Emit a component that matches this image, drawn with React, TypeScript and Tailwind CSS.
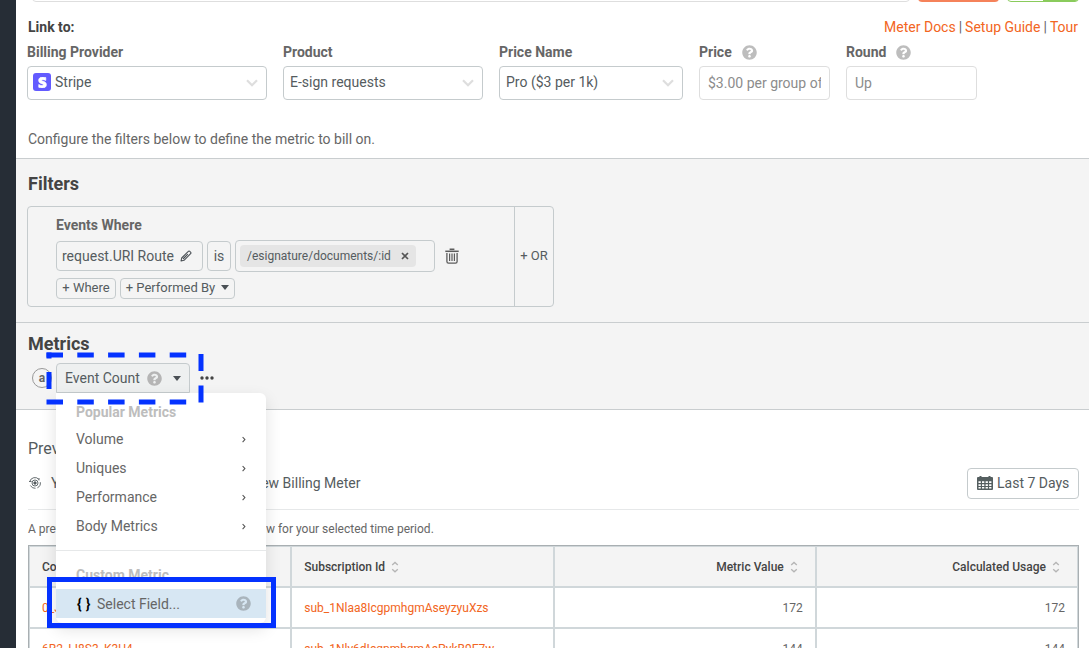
import { useState } from "react";
import type { ReactNode } from "react";
import { FaQuestionCircle, FaStripeS } from "react-icons/fa";

function Help({ className = "text-[#bdbdbd]" }: { className?: string }) {
  return <FaQuestionCircle className={`size-[15px] shrink-0 ${className}`} aria-hidden />;
}

function Chevron() {
  return (
    <svg viewBox="0 0 12 8" className="pointer-events-none absolute top-[13px] right-[9px] h-2 w-3" aria-hidden>
      <path d="M1 1.2 6 6.2 11 1.2" fill="none" stroke="#dedede" strokeWidth="2.2" />
    </svg>
  );
}

function SelectField({ id, label, value, width, icon }: { id: string; label: string; value: string; width: string; icon?: ReactNode }) {
  return (
    <div className={width}>
      <label htmlFor={id} className="block leading-5 font-bold text-[#666]">{label}</label>
      <div className="relative mt-1">
        {icon}
        <select
          id={id}
          className={`block h-[34px] w-full appearance-none rounded border border-[#c5cbcd] bg-white pr-6 pb-0.5 text-[#555c60] ${icon ? "pl-[27px]" : "pl-1.5"}`}
        >
          <option>{value}</option>
        </select>
        <Chevron />
      </div>
    </div>
  );
}

function TextField({ id, label, placeholder }: { id: string; label: string; placeholder: string }) {
  return (
    <div className="w-[131px]">
      <label htmlFor={id} className="flex h-5 items-center gap-2.5 font-bold text-[#666]">
        {label}
        <Help />
      </label>
      <input
        id={id}
        placeholder={placeholder}
        className="mt-1 block h-[34px] w-full rounded-sm border border-[#dedede] bg-white px-2 text-[#808080] placeholder:text-[#8c8c8c]"
      />
    </div>
  );
}

function Sorter() {
  return (
    <svg viewBox="0 0 8 12" className="h-3 w-2" aria-hidden>
      <path d="M1.2 4 4 1.4 6.800 4M1.2 8.200 4 10.800 6.800 8.200" fill="none" stroke="#b5b5b5" strokeWidth="1.300" />
    </svg>
  );
}

function Caret() {
  return (
    <svg viewBox="0 0 8 5" className="h-[5px] w-2" aria-hidden>
      <path d="M0 0h8L4 5z" fill="#4a5055" />
    </svg>
  );
}

function Pencil() {
  return (
    <svg viewBox="0 0 12 12" className="size-3" aria-hidden>
      <path d="M1 11l.7-3L8.300 1.400a1 1 0 0 1 1.500 0l.800.800a1 1 0 0 1 0 1.500L4 10.300zM3 9l4.800-4.800" fill="none" stroke="#4a5055" strokeWidth="1.100" strokeLinejoin="round" />
    </svg>
  );
}

function Trash() {
  return (
    <svg viewBox="0 0 14 16" className="h-4 w-3.5" fill="none" stroke="#5c5c5c" aria-hidden>
      <path d="M4.6 1.300h4.800" strokeWidth="1.600" />
      <path d="M0.300 3.300h13.400" strokeWidth="1.500" />
      <path d="M1.900 5v8.500q0 1.700 1.600 1.700h7q1.600 0 1.600-1.700V5" strokeWidth="1.300" />
      <path d="M4.600 5.500v7.500M7 5.500v7.500M9.400 5.500v7.500" strokeWidth="1.200" />
    </svg>
  );
}

function Calendar() {
  return (
    <svg viewBox="0 0 16 14" className="h-3.5 w-4 shrink-0" aria-hidden>
      <path d="M2.500 0h2v1h7V0h2v1H15q1 0 1 1v11q0 1-1 1H1q-1 0-1-1V2q0-1 1-1h1.500z" fill="#555f60" />
      <path
        d="M1.500 5.200h2.300v1.900H1.500zM5 5.200h2.300v1.900H5zM8.600 5.200h2.300v1.900H8.600zM12.100 5.200h2.300v1.900h-2.300zM1.500 8.200h2.300v1.700H1.500zM5 8.200h2.300v1.700H5zM8.600 8.200h2.300v1.700H8.600zM12.100 8.200h2.300v1.700h-2.300zM1.500 11h2.300v1.600H1.500zM5 11h2.300v1.600H5zM8.600 11h2.300v1.600H8.600zM12.100 11h2.300v1.600h-2.300z"
        fill="#fff"
      />
    </svg>
  );
}

function Target() {
  return (
    <svg viewBox="0 0 12 12" className="size-3" fill="none" stroke="#555c60" aria-hidden>
      <circle cx="6" cy="6" r="1.2" fill="#555c60" />
      <circle cx="6" cy="6" r="3" strokeWidth="0.9" />
      <path d="M0.8 4.4A5.3 5.3 0 0 1 10 2.5M11.3 5.2A5.3 5.3 0 0 1 8.4 10.8M6.5 11.3A5.3 5.3 0 0 1 1.4 8.5M0 4.5h2.6M10 1v2.4" strokeWidth="0.9" />
    </svg>
  );
}

const METRICS = ["Volume", "Uniques", "Performance", "Body Metrics"];

function MetricMenu() {
  return (
    <div role="menu" className="absolute top-full left-0 z-10 w-[210px] rounded-b-md rounded-tr-md bg-white pt-2 pb-[5px] text-[#666] shadow-[0_6px_16px_rgba(0,0,0,0.12)]">
      <h3 className="px-5 pb-px leading-[22px] font-bold text-[#bdbdbd]">Popular Metrics</h3>
      {METRICS.map((name) => (
        <button key={name} role="menuitem" className="flex h-[29px] w-full items-center justify-between px-5 text-left">
          {name}
          <svg viewBox="0 0 4 7" className="mt-px h-[7px] w-1" aria-hidden>
            <path d="M.6 1 2.900 3.600.6 6.200" fill="none" stroke="#555" strokeWidth="1.100" />
          </svg>
        </button>
      ))}
      <hr className="mt-2.5 border-[#e6e8e9]" />
      <h3 className="px-5 pt-3 pb-0.5 leading-6 font-bold text-[#bdbdbd]">Custom Metric</h3>
      <button role="menuitem" className="flex h-[29px] w-full items-center bg-[#d7e7f3] pr-[15px] pl-[21px]">
        <span className="flex w-5 gap-1 font-bold text-black">
          <span>{"{"}</span>
          <span>{"}"}</span>
        </span>
        <span className="flex-1 text-left">Select Field...</span>
        <Help className="text-[#a9b4bc]" />
      </button>
      <div className="pointer-events-none absolute -right-2.5 -bottom-[5px] -left-[9px] h-[51px] border-[5px] border-[#0432ff]" />
    </div>
  );
}

function DashedFrame() {
  return (
    <svg viewBox="0 0 158 54" className="pointer-events-none absolute -top-[11px] -left-[10px] z-20 h-[54px] w-[158px]" stroke="#0432ff" strokeWidth="5" fill="none" aria-hidden>
      <path d="M0.500 3H141" strokeDasharray="16.500 14.300" />
      <path d="M0.500 50H141" strokeDasharray="16.500 14.300" />
      <path d="M3 0.500V6.500M3 20v17" />
      <path d="M155 2v17M155 33.500v17" />
    </svg>
  );
}

const ROWS = [
  { company: "0_J2K8_4LM9", sub: "sub_1Nlaa8IcgpmhgmAseyzyuXzs", value: 172 },
  { company: "6R2_LI8S3_K3U4", sub: "sub_1Nly6dIcgpmhgmAsPykB9E7w", value: 144 },
];

const HEADERS = ["Company Id", "Subscription Id", "Metric Value", "Calculated Usage"];

export default function App() {
  const [open, setOpen] = useState(true);
  return (
    <div className="flex h-screen overflow-hidden bg-white font-[Roboto,sans-serif] text-sm text-[#666]">
      <aside className="w-4 shrink-0 bg-[#262d36]" />
      <main className="min-w-0 flex-1">
        <div className="flex h-0.5 items-end overflow-hidden pr-2.5 pl-4">
          <input aria-label="Meter name" className="h-8 min-w-0 flex-1 rounded border border-[#dedede]" />
          <button aria-label="Save" className="ml-2 h-8 w-[81px] rounded bg-[#f5825a]" />
          <div className="ml-2 flex h-8 w-[72px] overflow-hidden rounded border border-[#8acb5c]">
            <button aria-label="Off" className="flex-1" />
            <button aria-label="On" className="flex-1 bg-[#8acb5c]" />
          </div>
        </div>

        <section className="h-[156px] pl-[11px]">
          <div className="flex items-center justify-between pt-[15px] pr-[11px] pl-px">
            <h2 className="leading-5 font-bold text-[#444]">Link to:</h2>
            <nav className="flex items-center gap-[3px] leading-5">
              <a href="#docs" className="text-[#f26522]">Meter Docs</a>|
              <a href="#setup" className="text-[#f26522]">Setup Guide</a>|
              <a href="#tour" className="text-[#f26522]">Tour</a>
            </nav>
          </div>
          <div className="mt-[5px] flex gap-4">
            <SelectField
              id="provider"
              label="Billing Provider"
              value="Stripe"
              width="w-60"
              icon={
                <span className="pointer-events-none absolute top-[7px] left-1.5 flex size-[18px] items-center justify-center rounded-[3px] bg-[#635bff]">
                  <FaStripeS className="size-[11px] text-white" stroke="white" strokeWidth="30" />
                </span>
              }
            />
            <SelectField id="product" label="Product" value="E-sign requests" width="w-[200px]" />
            <SelectField id="price-name" label="Price Name" value="Pro ($3 per 1k)" width="w-46" />
            <TextField id="price" label="Price" placeholder="$3.00 per group of 1000" />
            <TextField id="round" label="Round" placeholder="Up" />
          </div>
          <p className="mt-[29px] pl-px leading-5">Configure the filters below to define the metric to bill on.</p>
        </section>

        <section className="h-[164px] border-t border-[#c9cdcf] bg-[#f4f4f4] pl-[11px]">
          <h2 className="pt-[13px] pl-px text-lg leading-6 font-bold text-[#444]">Filters</h2>
          <div className="mt-2.5 flex h-[101px] w-[527px] rounded-sm border border-[#c5cbcd]">
            <div className="flex-1 pt-2 pl-7">
              <h3 className="leading-5 font-bold text-[#666]">Events Where</h3>
              <div className="mt-[5px] flex items-center gap-1 text-[#555c60]">
                <button className="flex h-[30px] w-[147px] items-center gap-1.5 rounded border border-[#c5cbcd] px-[5px]">
                  request.URI Route <Pencil />
                </button>
                <button className="h-[30px] w-6 rounded border border-[#c5cbcd]">is</button>
                <div className="flex h-8 w-[200px] items-center rounded border border-[#c5cbcd] px-1">
                  <span className="flex h-[22px] w-[176px] items-center justify-between rounded-sm bg-[#e5e5e5] px-[7px] text-xs">
                    /esignature/documents/:id
                    <button aria-label="Remove value">
                      <svg viewBox="0 0 8 8" className="size-2" aria-hidden>
                        <path d="M1 1l6 6M7 1L1 7" stroke="#555" strokeWidth="1.700" />
                      </svg>
                    </button>
                  </span>
                </div>
                <button aria-label="Delete filter" className="ml-1.5"><Trash /></button>
              </div>
              <div className="mt-1.5 flex gap-1 text-[13px] leading-4 text-[#555c60]">
                <button className="h-[21px] w-[60px] rounded-sm border border-[#c5cbcd] pb-0.5">+ Where</button>
                <button className="flex h-[21px] w-[115px] items-center justify-center gap-1.5 rounded-sm border border-[#c5cbcd] pb-0.5">
                  + Performed By <Caret />
                </button>
              </div>
            </div>
            <button className="w-[39px] border-l border-[#c5cbcd] text-[13px] text-[#555c60]">+ OR</button>
          </div>
        </section>

        <section className="h-22 border-y border-[#c9cdcf] bg-[#f4f4f4] pl-3">
          <h2 className="pt-[9px] text-lg leading-6 font-bold text-[#444]">Metrics</h2>
          <div className="mt-[7px] flex items-center">
            <span className="ml-1 flex size-5 items-center justify-center rounded-full border border-[#999] pb-px text-xs font-bold">a</span>
            <div className="relative ml-1">
              <button
                onClick={() => setOpen(!open)}
                aria-expanded={open}
                className="flex h-[30px] w-[134px] items-center rounded-t border border-[#c5cbcd] bg-[#eef0f0] px-2 text-[#555c60]"
              >
                <span>Event Count</span>
                <span className="ml-[7px] flex-1"><Help className="text-[#b5b5b5]" /></span>
                <Caret />
              </button>
              <DashedFrame />
              {open && <MetricMenu />}
            </div>
            <button aria-label="More options" className="ml-2.5">
              <svg viewBox="0 0 14 4" className="h-1 w-3.5" fill="#444" aria-hidden>
                <circle cx="2" cy="2" r="1.700" />
                <circle cx="7" cy="2" r="1.700" />
                <circle cx="12" cy="2" r="1.700" />
              </svg>
            </button>
          </div>
        </section>

        <section className="pr-2.5 pl-3">
          <h2 className="pt-[27px] text-base leading-6 text-[#555c60]">Preview</h2>
          <div className="mt-[7px] flex items-center justify-between border-b border-[#e6e8e9] pb-2.5">
            <p className="flex items-center gap-2.5 pb-px pl-px text-[#555c60]">
              <Target />
              <span>You are previewing the data of a new Billing Meter</span>
            </p>
            <button className="flex h-[31px] w-28 items-center gap-1 rounded-sm border border-[#c5cbcd] pb-px pl-[9px] whitespace-nowrap text-[#555c60]">
              <Calendar />
              Last 7 Days
            </button>
          </div>
          <p className="pt-2.5 text-xs leading-[18px]">A preview of what the customers look like now for your selected time period.</p>
          <table className="mt-[7px] w-full table-fixed border-collapse text-xs outline-1 -outline-offset-1 outline-[#a9afb2]">
            <thead>
              <tr className="h-[41px] bg-[#f4f4f4] text-[#444]">
                {HEADERS.map((name, i) => (
                  <th key={name} className="border-2 border-[#d0d7da] px-3 font-medium">
                    <span className={`flex items-center gap-1.5 ${i > 1 ? "justify-end pr-[5px]" : ""}`}>
                      {name} <Sorter />
                    </span>
                  </th>
                ))}
              </tr>
            </thead>
            <tbody>
              {ROWS.map((row) => (
                <tr key={row.sub} className="h-[41px]">
                  <td className="border-2 border-[#d0d7da] px-3"><a href="#company" className="text-[#f26522]">{row.company}</a></td>
                  <td className="border-2 border-[#d0d7da] px-3"><a href="#subscription" className="text-[#f26522]">{row.sub}</a></td>
                  <td className="border-2 border-[#d0d7da] px-3 text-right">{row.value}</td>
                  <td className="border-2 border-[#d0d7da] px-3 text-right">{row.value}</td>
                </tr>
              ))}
            </tbody>
          </table>
        </section>
      </main>
    </div>
  );
}
